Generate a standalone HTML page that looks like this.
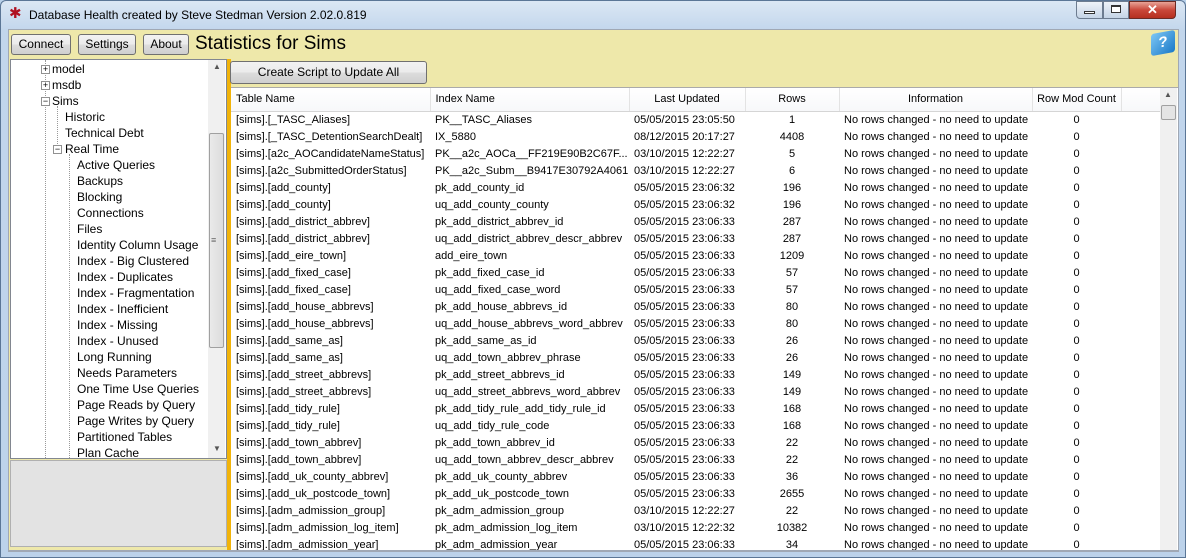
<!DOCTYPE html>
<html><head><style>
*{margin:0;padding:0;box-sizing:border-box}
body{width:1186px;height:558px;overflow:hidden;background:#b9d1ea;font-family:"Liberation Sans",sans-serif;font-size:12px;color:#000;position:relative}
.a{position:absolute}
.btn{position:absolute;border:1px solid #707070;border-radius:3px;background:linear-gradient(#f2f2f2,#ebebeb 50%,#dddddd 51%,#cfcfcf);text-align:center;font-size:12px;line-height:19px}
.tree div{position:absolute;white-space:nowrap;line-height:16px}
table{border-collapse:collapse;table-layout:fixed;position:absolute;left:231px;top:88px;width:929px}
td{height:17px;padding:0 0 0 5px;white-space:nowrap;overflow:hidden;font-size:11px}
th{height:23px;font-weight:normal;border-right:1px solid #e3e3e3;border-bottom:1px solid #d5d5d5;background:linear-gradient(#fff,#f7f8fa);font-size:11px;white-space:nowrap;overflow:hidden}
.c{text-align:center;padding:0}
.pb{position:absolute;width:9px;height:9px;border:1px solid #919191;background:#fff;font-size:9px;line-height:7px;text-align:center;color:#000}
</style></head><body>
<div class="a" style="left:0;top:0;width:1186px;height:558px;border:1px solid #5b7696;border-radius:6px 6px 0 0;background:linear-gradient(#dbe7f4,#c2d6ec 30px,#bcd2ea)"></div>
<div class="a" style="left:9px;top:7px;width:14px;height:14px;color:#b01020;font-size:15px;line-height:14px">✱</div>
<div class="a" style="left:29px;top:8px;font-size:12px">Database Health created by Steve Stedman Version 2.02.0.819</div>
<div class="a" style="left:1076px;top:1px;width:27px;height:18px;border:1px solid #6d7c90;border-radius:0 0 0 4px;background:linear-gradient(#eef3f9,#c5d4e6)"></div>
<div class="a" style="left:1084px;top:11px;width:11px;height:3px;border:1px solid #333;background:#fff"></div>
<div class="a" style="left:1103px;top:1px;width:26px;height:18px;border:1px solid #6d7c90;background:linear-gradient(#eef3f9,#c5d4e6)"></div>
<div class="a" style="left:1111px;top:5px;width:10px;height:8px;border:1px solid #333;border-top-width:2px;background:#fff"></div>
<div class="a" style="left:1129px;top:1px;width:47px;height:18px;border:1px solid #6b2a24;border-radius:0 0 4px 0;background:linear-gradient(#e8a397,#c9473a 50%,#b52f20);color:#fff;font-weight:bold;text-align:center;line-height:16px;font-size:13px">✕</div>
<div class="a" style="left:8px;top:29px;width:1171px;height:522px;background:#eee8aa;border:1px solid #a0a8b4"></div>
<div class="btn" style="left:11px;top:34px;width:60px;height:21px">Connect</div>
<div class="btn" style="left:78px;top:34px;width:58px;height:21px">Settings</div>
<div class="btn" style="left:143px;top:34px;width:46px;height:21px">About</div>
<div class="a" style="left:195px;top:33px;font-size:19px">Statistics for Sims</div>
<div class="a" style="left:1151px;top:32px;width:24px;height:22px;background:linear-gradient(135deg,#7cc6f4,#1a79c8);border-radius:3px;transform:skewY(-10deg);color:#fff;font-weight:bold;text-align:center;line-height:22px;font-size:15px">?</div>
<div class="a" style="left:10px;top:59px;width:217px;height:400px;background:#fff;border:1px solid #828790"></div>
<div class="a" style="left:208px;top:60px;width:17px;height:398px;background:#f0f0f0"></div>
<div class="a" style="left:209px;top:133px;width:15px;height:215px;background:linear-gradient(90deg,#eaeaea,#dcdcdc);border:1px solid #a0a0a0;border-radius:2px"></div>
<div class="a" style="left:213px;top:62px;font-size:8px;color:#555">▲</div>
<div class="a" style="left:213px;top:444px;font-size:8px;color:#555">▼</div>
<div class="a" style="left:211px;top:235px;font-size:9px;color:#666">≡</div>
<div class="a" style="left:10px;top:460px;width:217px;height:87px;background:#e3e3e3;border:1px solid #b0b0b0"></div>
<div class="a" style="left:227px;top:59px;width:4px;height:492px;background:#f1b30a"></div>
<div class="a" style="left:45px;top:60px;height:398px;border-left:1px dotted #999"></div>
<div class="a" style="left:57px;top:106px;height:48px;border-left:1px dotted #999"></div>
<div class="a" style="left:69px;top:154px;height:304px;border-left:1px dotted #999"></div>
<div class="pb" style="left:41px;top:65px">+</div>
<div class="pb" style="left:41px;top:81px">+</div>
<div class="pb" style="left:41px;top:97px">−</div>
<div class="pb" style="left:53px;top:145px">−</div>
<div class="tree">
<div style="left:52px;top:61px">model</div>
<div style="left:52px;top:77px">msdb</div>
<div style="left:52px;top:93px">Sims</div>
<div style="left:65px;top:109px">Historic</div>
<div style="left:65px;top:125px">Technical Debt</div>
<div style="left:65px;top:141px">Real Time</div>
<div style="left:77px;top:157px">Active Queries</div>
<div style="left:77px;top:173px">Backups</div>
<div style="left:77px;top:189px">Blocking</div>
<div style="left:77px;top:205px">Connections</div>
<div style="left:77px;top:221px">Files</div>
<div style="left:77px;top:237px">Identity Column Usage</div>
<div style="left:77px;top:253px">Index - Big Clustered</div>
<div style="left:77px;top:269px">Index - Duplicates</div>
<div style="left:77px;top:285px">Index - Fragmentation</div>
<div style="left:77px;top:301px">Index - Inefficient</div>
<div style="left:77px;top:317px">Index - Missing</div>
<div style="left:77px;top:333px">Index - Unused</div>
<div style="left:77px;top:349px">Long Running</div>
<div style="left:77px;top:365px">Needs Parameters</div>
<div style="left:77px;top:381px">One Time Use Queries</div>
<div style="left:77px;top:397px">Page Reads by Query</div>
<div style="left:77px;top:413px">Page Writes by Query</div>
<div style="left:77px;top:429px">Partitioned Tables</div>
<div style="left:77px;top:445px;height:13px;overflow:hidden">Plan Cache</div>
</div>
<div class="btn" style="left:230px;top:61px;width:197px;height:23px;line-height:21px">Create Script to Update All</div>
<div class="a" style="left:231px;top:87px;width:947px;height:464px;background:#fff;border-top:1px solid #aaa;overflow:hidden"></div>
<div class="a" style="left:1160px;top:88px;width:17px;height:462px;background:#f0f0f0"></div>
<div class="a" style="left:1161px;top:105px;width:15px;height:15px;background:#e4e4e4;border:1px solid #a0a0a0;border-radius:2px"></div>
<div class="a" style="left:1164px;top:90px;font-size:8px;color:#555">▲</div>
<div style="position:absolute;left:0;top:0;width:1160px;height:550px;overflow:hidden">
<table>
<colgroup><col style="width:199px"><col style="width:199px"><col style="width:116px"><col style="width:94px"><col style="width:193px"><col style="width:89px"><col style="width:39px"></colgroup>
<tr><th style="text-align:left;padding-left:5px">Table Name</th><th style="text-align:left;padding-left:5px">Index Name</th><th>Last Updated</th><th>Rows</th><th>Information</th><th>Row Mod Count</th><th style="border-right:0"></th></tr>
<tr><td>[sims].[_TASC_Aliases]</td><td>PK__TASC_Aliases</td><td>05/05/2015 23:05:50</td><td class="c">1</td><td>No rows changed - no need to update</td><td class="c">0</td><td></td></tr>
<tr><td>[sims].[_TASC_DetentionSearchDealt]</td><td>IX_5880</td><td>08/12/2015 20:17:27</td><td class="c">4408</td><td>No rows changed - no need to update</td><td class="c">0</td><td></td></tr>
<tr><td>[sims].[a2c_AOCandidateNameStatus]</td><td>PK__a2c_AOCa__FF219E90B2C67F...</td><td>03/10/2015 12:22:27</td><td class="c">5</td><td>No rows changed - no need to update</td><td class="c">0</td><td></td></tr>
<tr><td>[sims].[a2c_SubmittedOrderStatus]</td><td>PK__a2c_Subm__B9417E30792A4061</td><td>03/10/2015 12:22:27</td><td class="c">6</td><td>No rows changed - no need to update</td><td class="c">0</td><td></td></tr>
<tr><td>[sims].[add_county]</td><td>pk_add_county_id</td><td>05/05/2015 23:06:32</td><td class="c">196</td><td>No rows changed - no need to update</td><td class="c">0</td><td></td></tr>
<tr><td>[sims].[add_county]</td><td>uq_add_county_county</td><td>05/05/2015 23:06:32</td><td class="c">196</td><td>No rows changed - no need to update</td><td class="c">0</td><td></td></tr>
<tr><td>[sims].[add_district_abbrev]</td><td>pk_add_district_abbrev_id</td><td>05/05/2015 23:06:33</td><td class="c">287</td><td>No rows changed - no need to update</td><td class="c">0</td><td></td></tr>
<tr><td>[sims].[add_district_abbrev]</td><td>uq_add_district_abbrev_descr_abbrev</td><td>05/05/2015 23:06:33</td><td class="c">287</td><td>No rows changed - no need to update</td><td class="c">0</td><td></td></tr>
<tr><td>[sims].[add_eire_town]</td><td>add_eire_town</td><td>05/05/2015 23:06:33</td><td class="c">1209</td><td>No rows changed - no need to update</td><td class="c">0</td><td></td></tr>
<tr><td>[sims].[add_fixed_case]</td><td>pk_add_fixed_case_id</td><td>05/05/2015 23:06:33</td><td class="c">57</td><td>No rows changed - no need to update</td><td class="c">0</td><td></td></tr>
<tr><td>[sims].[add_fixed_case]</td><td>uq_add_fixed_case_word</td><td>05/05/2015 23:06:33</td><td class="c">57</td><td>No rows changed - no need to update</td><td class="c">0</td><td></td></tr>
<tr><td>[sims].[add_house_abbrevs]</td><td>pk_add_house_abbrevs_id</td><td>05/05/2015 23:06:33</td><td class="c">80</td><td>No rows changed - no need to update</td><td class="c">0</td><td></td></tr>
<tr><td>[sims].[add_house_abbrevs]</td><td>uq_add_house_abbrevs_word_abbrev</td><td>05/05/2015 23:06:33</td><td class="c">80</td><td>No rows changed - no need to update</td><td class="c">0</td><td></td></tr>
<tr><td>[sims].[add_same_as]</td><td>pk_add_same_as_id</td><td>05/05/2015 23:06:33</td><td class="c">26</td><td>No rows changed - no need to update</td><td class="c">0</td><td></td></tr>
<tr><td>[sims].[add_same_as]</td><td>uq_add_town_abbrev_phrase</td><td>05/05/2015 23:06:33</td><td class="c">26</td><td>No rows changed - no need to update</td><td class="c">0</td><td></td></tr>
<tr><td>[sims].[add_street_abbrevs]</td><td>pk_add_street_abbrevs_id</td><td>05/05/2015 23:06:33</td><td class="c">149</td><td>No rows changed - no need to update</td><td class="c">0</td><td></td></tr>
<tr><td>[sims].[add_street_abbrevs]</td><td>uq_add_street_abbrevs_word_abbrev</td><td>05/05/2015 23:06:33</td><td class="c">149</td><td>No rows changed - no need to update</td><td class="c">0</td><td></td></tr>
<tr><td>[sims].[add_tidy_rule]</td><td>pk_add_tidy_rule_add_tidy_rule_id</td><td>05/05/2015 23:06:33</td><td class="c">168</td><td>No rows changed - no need to update</td><td class="c">0</td><td></td></tr>
<tr><td>[sims].[add_tidy_rule]</td><td>uq_add_tidy_rule_code</td><td>05/05/2015 23:06:33</td><td class="c">168</td><td>No rows changed - no need to update</td><td class="c">0</td><td></td></tr>
<tr><td>[sims].[add_town_abbrev]</td><td>pk_add_town_abbrev_id</td><td>05/05/2015 23:06:33</td><td class="c">22</td><td>No rows changed - no need to update</td><td class="c">0</td><td></td></tr>
<tr><td>[sims].[add_town_abbrev]</td><td>uq_add_town_abbrev_descr_abbrev</td><td>05/05/2015 23:06:33</td><td class="c">22</td><td>No rows changed - no need to update</td><td class="c">0</td><td></td></tr>
<tr><td>[sims].[add_uk_county_abbrev]</td><td>pk_add_uk_county_abbrev</td><td>05/05/2015 23:06:33</td><td class="c">36</td><td>No rows changed - no need to update</td><td class="c">0</td><td></td></tr>
<tr><td>[sims].[add_uk_postcode_town]</td><td>pk_add_uk_postcode_town</td><td>05/05/2015 23:06:33</td><td class="c">2655</td><td>No rows changed - no need to update</td><td class="c">0</td><td></td></tr>
<tr><td>[sims].[adm_admission_group]</td><td>pk_adm_admission_group</td><td>03/10/2015 12:22:27</td><td class="c">22</td><td>No rows changed - no need to update</td><td class="c">0</td><td></td></tr>
<tr><td>[sims].[adm_admission_log_item]</td><td>pk_adm_admission_log_item</td><td>03/10/2015 12:22:32</td><td class="c">10382</td><td>No rows changed - no need to update</td><td class="c">0</td><td></td></tr>
<tr><td>[sims].[adm_admission_year]</td><td>pk_adm_admission_year</td><td>05/05/2015 23:06:33</td><td class="c">34</td><td>No rows changed - no need to update</td><td class="c">0</td><td></td></tr>
</table>
</div>
<div class="a" style="left:8px;top:550px;width:1171px;height:2px;background:#a0a8b4"></div>
</body></html>
